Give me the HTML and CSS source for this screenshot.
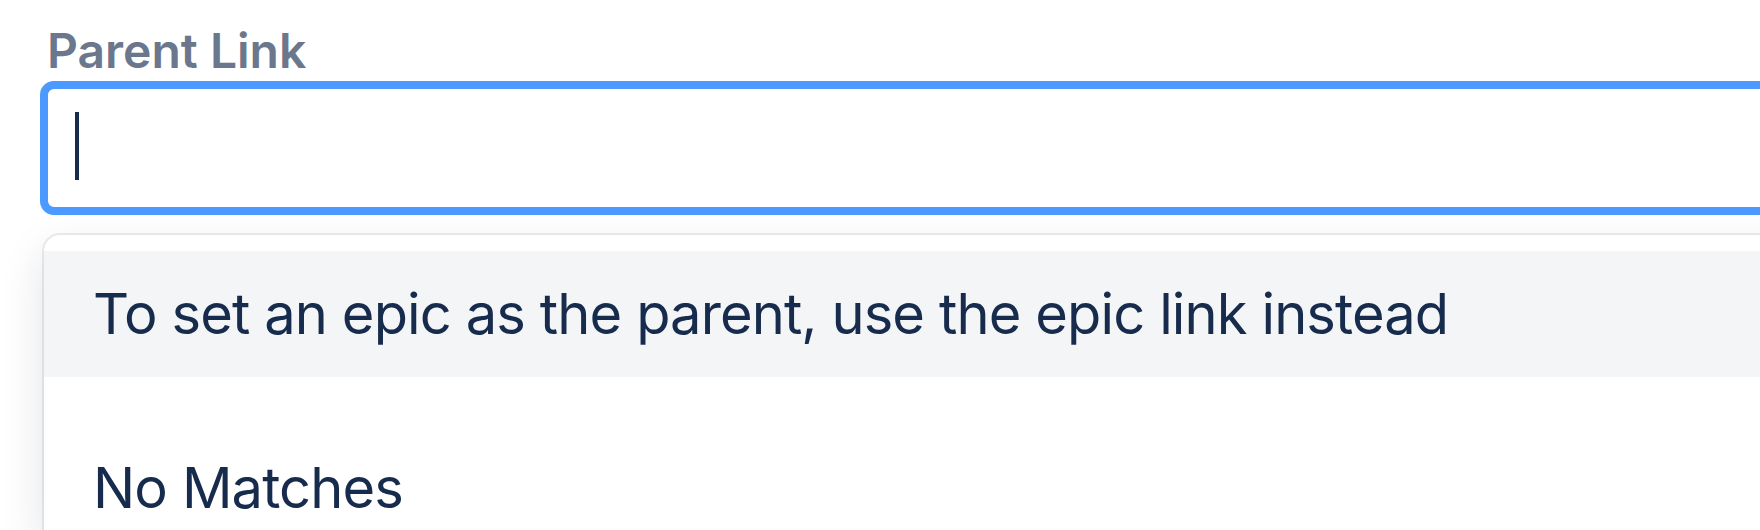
FILE: index.html
```html
<!DOCTYPE html>
<html lang="en">
<head>
<meta charset="utf-8">
<title>Parent Link</title>
<link rel="stylesheet" href="styles.css">
</head>
<body>
  <div class="field">
    <label class="field-label">Parent Link</label>
    <div class="input">
      <span class="caret"></span>
    </div>
    <div class="menu">
      <div class="menu-item is-focused">To set an epic as the parent, use the epic link instead</div>
      <div class="menu-empty">No Matches</div>
    </div>
  </div>
</body>
</html>
```

FILE: styles.css
```css
html, body {
  margin: 0;
  padding: 0;
  background: #ffffff;
  overflow: hidden;
}

body {
  width: 1760px;
  height: 530px;
  font-family: Inter, "Noto Sans", "Liberation Sans", sans-serif;
  color: #172B4D;
}

.field {
  width: 1820px;
  padding: 27px 0 0 40px;
  box-sizing: border-box;
}

.field-label {
  display: block;
  font-size: 48px;
  line-height: 48px;
  font-weight: 600;
  color: #6B778C;
  margin: 0 0 6px 7px;
}

.input {
  box-sizing: border-box;
  height: 134px;
  border: 8px solid #4C9AFF;
  border-radius: 14px;
  background: #ffffff;
  display: flex;
  align-items: center;
  padding-left: 27px;
}

.caret {
  display: block;
  width: 4px;
  height: 68px;
  background: #172B4D;
  margin-top: -4px;
}

.menu {
  margin: 20px 0 0 4px;
  background: #ffffff;
  border-radius: 16px 16px 0 0;
  padding-top: 16px;
  box-shadow: 0 0 0 2px rgba(9, 30, 66, 0.08), 0 16px 44px rgba(9, 30, 66, 0.13);
  height: 295px;
  box-sizing: border-box;
}

.menu-item {
  height: 126px;
  line-height: 126px;
  padding-left: 49px;
  font-size: 56px;
  font-weight: 430;
  letter-spacing: -0.88px;
  white-space: nowrap;
}

.menu-item.is-focused {
  background: #F4F5F7;
}

.menu-empty {
  margin-top: 77px;
  line-height: 68px;
  padding-left: 49px;
  font-size: 56px;
  font-weight: 430;
  letter-spacing: -0.88px;
  white-space: nowrap;
}
```
